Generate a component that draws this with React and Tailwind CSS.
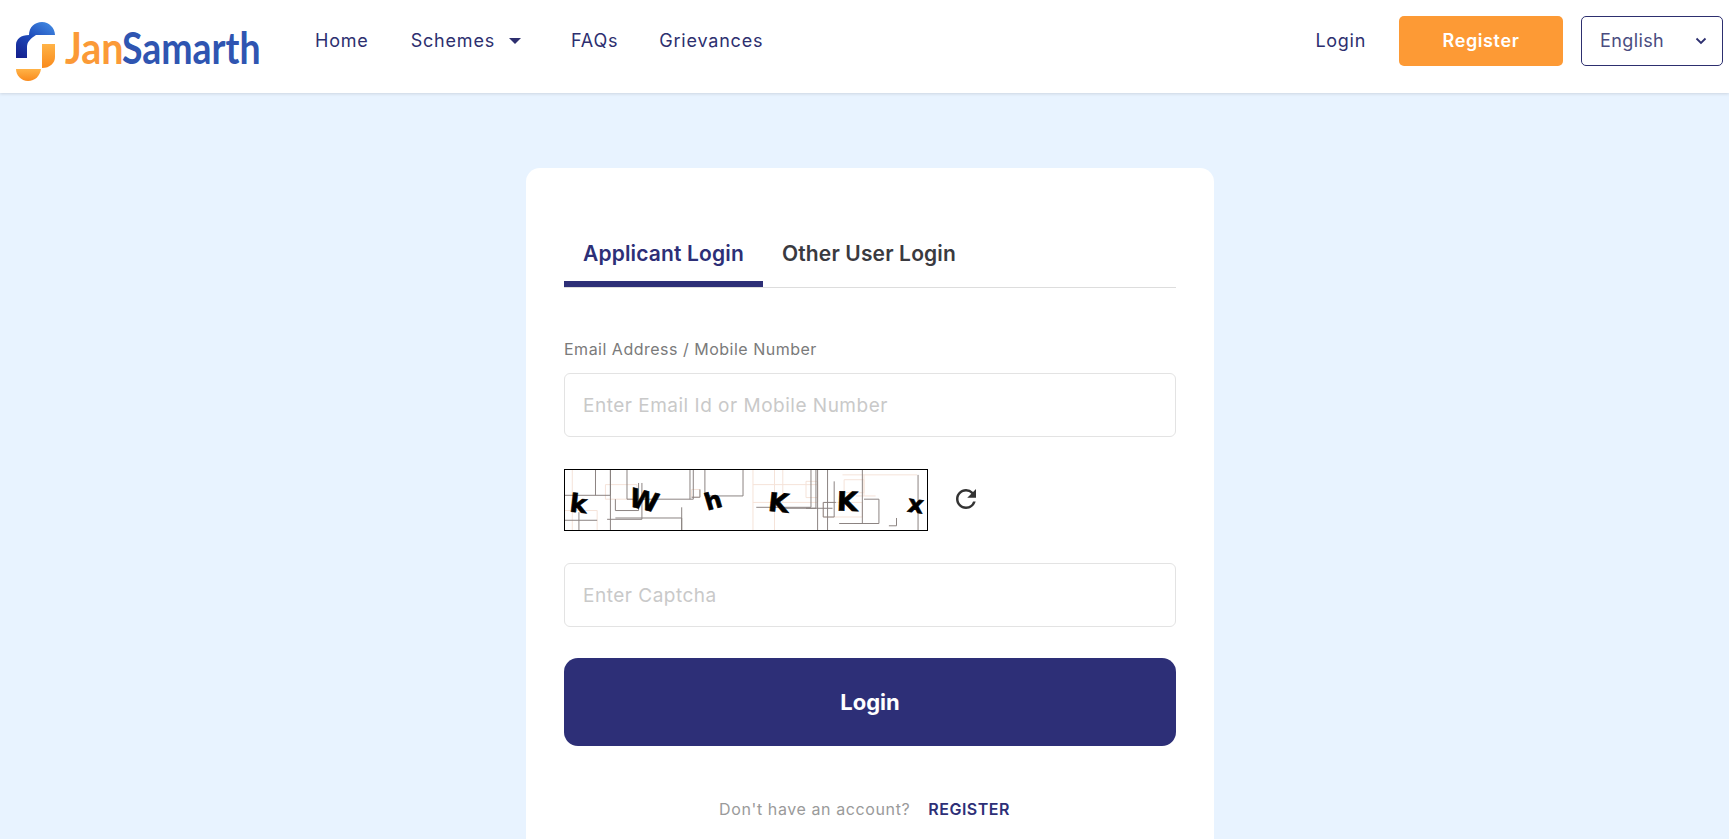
import React from "react";
import { MdRefresh } from "react-icons/md";

const lines = [
  "M43 118H180V40", "M135 40V118", "M230 40V130H430V40", "M420 40V130", "M580 40V120H465V40",
  "M170 192H275V80", "M265 80V165H195V130", "M180 40V225", "M85 170V225", "M43 195H140",
  "M195 188H395V225", "M395 155V225", "M620 155H785V40", "M800 40V158H700", "M805 40V225", "M835 40V225",
  "M855 75V185H822V140H860", "M940 40V205H870", "M915 205H990V130H945", "M1108 55V225", "M1020 212H1043V188",
  "M450 100V124H425", "M770 158H850",
];
const faint = [
  "M65 40V225", "M43 165H140V225", "M165 85H260V130H165Z", "M610 40V225", "M610 85H805V140H610", "M675 40V225",
  "M700 40V140", "M880 55H1105", "M885 70H945V110H885Z", "M770 75H805V125H770Z", "M945 55V120", "M920 120H980",
  "M822 140H940V185H822Z", "M425 100H450V124H425Z",
];
const letters = [
  ["k", 55, 168, 78, 6],
  ["W", 232, 150, 80, 14],
  ["h", 472, 166, 72, -16],
  ["K", 654, 166, 80, 6],
  ["K", 862, 165, 82, 2],
  ["x", 1074, 168, 74, 8],
];

function Captcha() {
  return (
    <svg width="362" height="60" viewBox="43 40 1092 185" preserveAspectRatio="none" className="block border border-black bg-white box-content">
      {faint.map((d, i) => <path key={i} d={d} fill="none" stroke="#f5e2d8" strokeWidth="3" />)}
      {lines.map((d, i) => <path key={i} d={d} fill="none" stroke="#8a8280" strokeWidth="3" />)}
      {letters.map(([t, x, y, s, r], i) => (
        <text key={i} x={x} y={y} fontSize={s} fontWeight="700" fontFamily="'DejaVu Sans', sans-serif" fill="#000" stroke="#000" strokeWidth="2" transform={`rotate(${r} ${x} ${y})`}>{t}</text>
      ))}
    </svg>
  );
}

function Logo() {
  return (
    <svg width="265" height="72" viewBox="0 0 265 72" className="block" aria-label="JanSamarth">
      <defs>
        <linearGradient id="lb" x1="0.8" y1="0" x2="0.1" y2="1">
          <stop offset="0" stopColor="#3f86e0" />
          <stop offset="0.5" stopColor="#1d48b8" />
          <stop offset="1" stopColor="#14208e" />
        </linearGradient>
        <linearGradient id="lo" x1="0" y1="0" x2="0" y2="1">
          <stop offset="0" stopColor="#ffb347" />
          <stop offset="1" stopColor="#f98a1c" />
        </linearGradient>
      </defs>
      <path d="M29 24C29 16 35 11 42 11C49 11 55 17 55 24H36C30 28 27 31 27 36V47H16V34C16 28 21 24 29 24Z" fill="url(#lb)" />
      <path d="M42 33H55V46C55 52 50 57 42 57Z" fill="url(#lo)" />
      <path d="M16 58H41C40 65 35 70 28 70C21 70 16 64 16 58Z" fill="url(#lo)" />
      <text transform="translate(65 53) scale(0.92 1)" fontFamily="'Lato', sans-serif" fontWeight="700" fontSize="43" fill="#fb9a37">Jan</text>
      <text transform="translate(122 53) scale(0.87 1)" fontFamily="'Lato', sans-serif" fontWeight="700" fontSize="43" fill="#2f55b1">Samarth</text>
    </svg>
  );
}

export default function App() {
  return (
    <div className="h-screen overflow-hidden bg-[#e8f3ff] font-['Inter','Noto_Sans',sans-serif]">
      <header className="h-[93px] bg-white shadow-[0_1px_3px_rgba(0,0,0,0.12)] flex items-center pr-[6px] text-[#2d2f6f]">
        <Logo />
        <nav className="flex items-center ml-[50px] -mt-[13px] text-[18px] tracking-[0.8px]">
          <a className="mr-[42px]">Home</a>
          <a className="flex items-center mr-[50px]">
            Schemes
            <svg width="12" height="6" viewBox="0 0 12 6" className="ml-[14px] mt-[2px]"><path d="M0 0H12L6 6Z" fill="#2d2f6f" /></svg>
          </a>
          <a className="mr-[41px]">FAQs</a>
          <a>Grievances</a>
        </nav>
        <div className="ml-auto flex items-center -mt-[12px]">
          <a className="mr-[33px] text-[18px] tracking-[0.7px]">Login</a>
          <button className="w-[164px] h-[50px] rounded-[5px] bg-[#fd9a35] text-white text-[18px] font-semibold tracking-[0.6px] mr-[18px]">Register</button>
          <div className="w-[142px] h-[50px] rounded-[5px] border border-[#2d2f6f] flex items-center justify-between pl-[18px] pr-[15px] text-[18px] tracking-[0.4px] text-[#4a4c80]">
            English
            <svg width="12" height="8" viewBox="0 0 12 8"><path d="M1.500 1.500L6 6L10.500 1.500" fill="none" stroke="#2d2f6f" strokeWidth="1.800" /></svg>
          </div>
        </div>
      </header>

      <main className="flex justify-center pt-[75px] pl-[11px]">
        <div className="w-[688px] h-[800px] bg-white rounded-t-[14px] px-[38px] pt-[62px]">
          <div className="flex border-b border-[#ddd] h-[58px] text-[21px] font-semibold tracking-[0.15px]">
            <div className="relative px-[19px] h-[57px] text-[#2d2f77] pt-[8px]">
              Applicant Login
              <div className="absolute left-0 right-0 bottom-0 h-[6px] bg-[#2d2f77]" />
            </div>
            <div className="px-[19px] text-[#3a3a3f] pt-[8px]">Other User Login</div>
          </div>

          <label className="block mt-[49px] text-[16px] leading-[24px] tracking-[0.5px] text-[#7a7a7a]">Email Address / Mobile Number</label>
          <div className="mt-[12px] h-[64px] rounded-[6px] border border-[#e3e3e3] flex items-center px-[18px] pt-[2px] text-[19px] tracking-[0.5px] text-[#c9c9c9]">Enter Email Id or Mobile Number</div>

          <div className="mt-[32px] flex items-center h-[62px]">
            <Captcha />
            <MdRefresh size="30" className="ml-[23px] text-[#333] -mt-[2px]" />
          </div>

          <div className="mt-[32px] h-[64px] rounded-[6px] border border-[#e3e3e3] flex items-center px-[18px] pt-[2px] text-[19px] tracking-[0.5px] text-[#c9c9c9]">Enter Captcha</div>

          <button className="mt-[31px] block w-full h-[88px] rounded-[14px] bg-[#2d2f77] text-white text-[22px] font-bold">Login</button>

          <div className="mt-[50px] pr-[11px] flex justify-center items-center text-[16px] leading-[26px]">
            <span className="text-[#9a9a9a] tracking-[0.6px]">Don't have an account?</span>
            <a className="ml-[18px] font-semibold tracking-[0.5px] text-[#2d2f77]">REGISTER</a>
          </div>
        </div>
      </main>
    </div>
  );
}
